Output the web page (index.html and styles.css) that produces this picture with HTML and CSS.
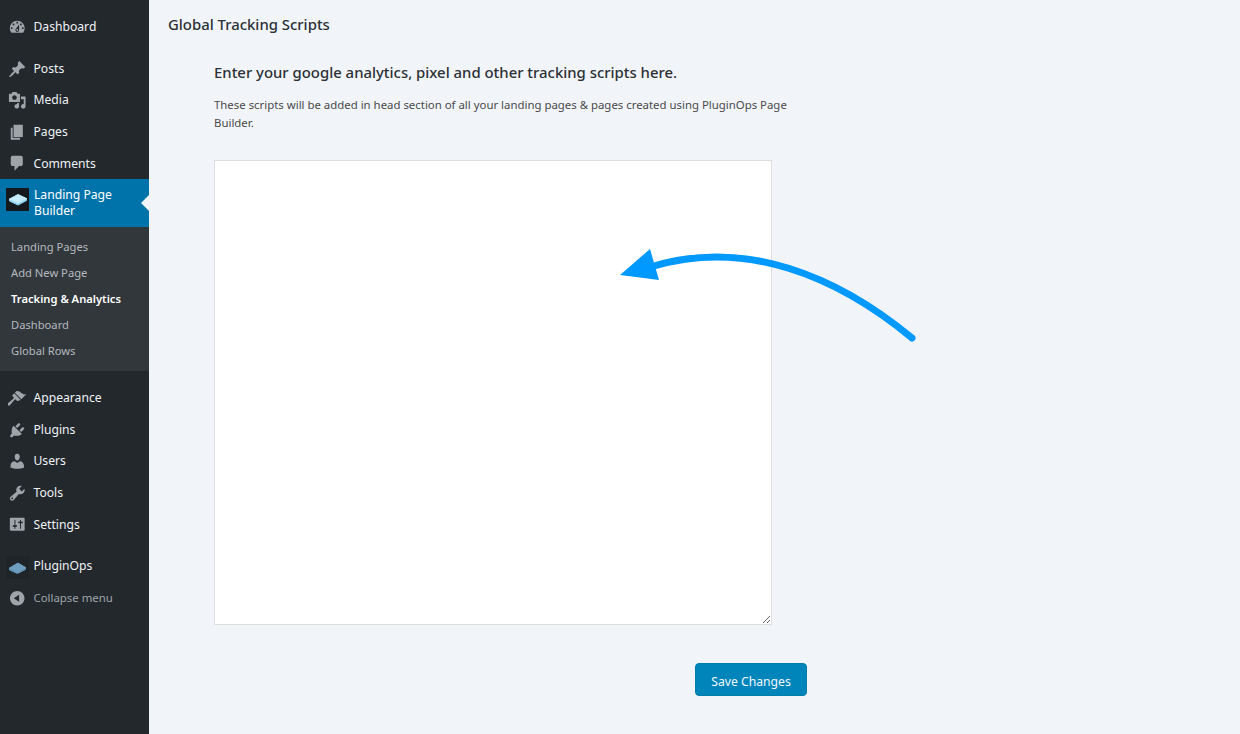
FILE: index.html
```html
<!DOCTYPE html>
<html lang="en">
<head>
<meta charset="utf-8">
<title>Global Tracking Scripts</title>
<link rel="stylesheet" href="styles.css">
</head>
<body>
<div class="layout">
  <aside class="sidebar">
    <nav class="menu">
      <a class="item"><svg class="icon" viewBox="0 0 20 20"><path d="M3.76 16h12.48c1.1-1.37 1.76-3.11 1.76-5 0-4.42-3.58-8-8-8s-8 3.58-8 8c0 1.89.66 3.63 1.76 5zM10 4c.55 0 1 .45 1 1s-.45 1-1 1-1-.45-1-1 .45-1 1-1zM6 6c.55 0 1 .45 1 1s-.45 1-1 1-1-.45-1-1 .45-1 1-1zm8 0c.55 0 1 .45 1 1s-.45 1-1 1-1-.45-1-1 .45-1 1-1zm-5.37 5.55L12 7v6c0 1.1-.9 2-2 2s-2-.9-2-2c0-.57.24-1.08.63-1.45zM4 10c.55 0 1 .45 1 1s-.45 1-1 1-1-.45-1-1 .45-1 1-1zm12 0c.55 0 1 .45 1 1s-.45 1-1 1-1-.45-1-1 .45-1 1-1zm-5 3c0-.55-.45-1-1-1s-1 .45-1 1 .45 1 1 1 1-.45 1-1z"/></svg><span>Dashboard</span></a>
      <div class="sep"></div>
      <a class="item"><svg class="icon" viewBox="0 0 20 20"><path d="M10.44 3.02l1.82-1.82 6.36 6.35-1.83 1.82c-1.05-.68-2.48-.57-3.41.36l-.75.75c-.92.93-1.04 2.35-.35 3.41l-1.83 1.82-2.41-2.41-2.8 2.79c-.42.42-3.38 2.71-3.8 2.29s1.86-3.39 2.28-3.81l2.79-2.79L4.1 9.36l1.83-1.82c1.05.69 2.48.57 3.4-.36l.75-.75c.93-.92 1.05-2.35.36-3.41z"/></svg><span>Posts</span></a>
      <a class="item"><svg class="icon" viewBox="0 0 20 20"><path d="M13 11V4c0-.55-.45-1-1-1h-1.67L9 1H5L3.67 3H2c-.55 0-1 .45-1 1v7c0 .55.45 1 1 1h10c.55 0 1-.45 1-1zM7 4.5c1.38 0 2.5 1.12 2.5 2.5S8.38 9.5 7 9.5 4.5 8.38 4.5 7 5.62 4.5 7 4.5zM14 6h5v10.5c0 1.38-1.12 2.5-2.5 2.5S14 17.88 14 16.5s1.12-2.5 2.5-2.5c.17 0 .34.02.5.05V9h-3V6zm-4 8.05V13h2v3.5c0 1.38-1.12 2.5-2.5 2.5S7 17.88 7 16.5 8.12 14 9.5 14c.17 0 .34.02.5.05z"/></svg><span>Media</span></a>
      <a class="item"><svg class="icon" viewBox="0 0 20 20"><path d="M6 15V2h10v13H6zm-1 1h8v2H3V5h2v11z"/></svg><span>Pages</span></a>
      <a class="item"><svg class="icon" viewBox="0 0 20 20"><path d="M5 2h9c1.1 0 2 .9 2 2v7c0 1.1-.9 2-2 2h-2l-5 5v-5H5c-1.1 0-2-.9-2-2V4c0-1.1.9-2 2-2z"/></svg><span>Comments</span></a>
      <a class="item item-current">
        <span class="logo logo-dark"><svg viewBox="0 0 23 23"><path class="book-side" d="M3.5 11 12 15 20.5 10.5 20.5 12.5 12 17 3.5 13z"/><path class="book-top" d="M3.5 11 12 6.5 20.5 10.5 12 15z"/></svg></span>
        <span>Landing Page<br>Builder</span>
      </a>
      <div class="submenu">
        <a class="sub">Landing Pages</a>
        <a class="sub">Add New Page</a>
        <a class="sub sub-current">Tracking &amp; Analytics</a>
        <a class="sub">Dashboard</a>
        <a class="sub">Global Rows</a>
      </div>
      <div class="sep sep-after-sub"></div>
      <a class="item"><svg class="icon" viewBox="0 0 20 20"><path d="M14.48 11.06L7.41 3.99l1.5-1.5c.5-.56 2.3-.47 3.51.32 1.21.8 1.43 1.28 2.91 2.1 1.18.64 2.45 1.26 4.45.85zm-.71.71L6.7 4.7 4.93 6.47c-.39.39-.39 1.02 0 1.41l1.06 1.06c.39.39.39 1.03 0 1.42-.6.6-6.04 5.1-6.04 5.1-.59.59-.59 1.54 0 2.12.59.59 1.54.59 2.12 0 0 0 4.5-5.44 5.1-6.04.39-.39 1.03-.39 1.42 0l1.06 1.06c.39.39 1.02.39 1.41 0z"/></svg><span>Appearance</span></a>
      <a class="item"><svg class="icon" viewBox="0 0 20 20"><path d="M13.11 4.36L9.87 7.6 8 5.73l3.24-3.24c.35-.34 1.05-.2 1.56.32.52.51.66 1.21.31 1.55zm-8 1.77l.91-1.12 9.01 9.01-1.19.84c-.71.71-2.63 1.16-3.82 1.16H6.14L4.9 17.26c-.59.59-1.54.59-2.12 0-.59-.58-.59-1.53 0-2.12l1.24-1.24v-3.88c0-1.13.4-3.19 1.09-3.89zm7.26 3.97l3.24-3.24c.34-.35 1.04-.21 1.55.31.52.51.66 1.21.31 1.55l-3.24 3.25z"/></svg><span>Plugins</span></a>
      <a class="item"><svg class="icon" viewBox="0 0 20 20"><path d="M10 9.25c-2.27 0-2.73-3.44-2.73-3.44C7 4.02 7.82 2 9.97 2c2.16 0 2.98 2.02 2.71 3.81 0 0-.41 3.44-2.68 3.44zm0 2.57L12.72 10c2.39 0 4.52 2.33 4.52 4.53v2.49s-3.65 1.13-7.24 1.13c-3.65 0-7.24-1.13-7.24-1.13v-2.49c0-2.25 1.94-4.48 4.47-4.48z"/></svg><span>Users</span></a>
      <a class="item"><svg class="icon" viewBox="0 0 20 20"><path d="M16.68 9.77c-1.34 1.34-3.3 1.67-4.95.99l-5.41 6.52c-.99.99-2.59.99-3.58 0s-.99-2.59 0-3.57l6.52-5.42c-.68-1.65-.35-3.61.99-4.95 1.28-1.28 3.12-1.62 4.72-1.06l-2.89 2.89 2.82 2.82 2.86-2.87c.53 1.58.18 3.39-1.08 4.65zM3.81 16.21c.4.39 1.04.39 1.43 0 .4-.4.4-1.04 0-1.43-.39-.4-1.03-.4-1.43 0-.39.39-.39 1.03 0 1.43z"/></svg><span>Tools</span></a>
      <a class="item"><svg class="icon" viewBox="0 0 20 20"><path d="M18 16V4c0-.55-.45-1-1-1H3c-.55 0-1 .45-1 1v12c0 .55.45 1 1 1h14c.55 0 1-.45 1-1zM8 11h1c.55 0 1 .45 1 1s-.45 1-1 1H8v1.5c0 .28-.22.5-.5.5s-.5-.22-.5-.5V13H6c-.55 0-1-.45-1-1s.45-1 1-1h1V5.5c0-.28.22-.5.5-.5s.5.22.5.5V11zm5-2h-1c-.55 0-1-.45-1-1s.45-1 1-1h1V5.5c0-.28.22-.5.5-.5s.5.22.5.5V7h1c.55 0 1 .45 1 1s-.45 1-1 1h-1v5.5c0 .28-.22.5-.5.5s-.5-.22-.5-.5V9z"/></svg><span>Settings</span></a>
      <div class="sep"></div>
      <a class="item">
        <span class="logo logo-faint"><svg viewBox="0 0 23 23"><path class="book-side-dim" d="M3.5 12 11.5 16.5 19.5 11.5 19.5 13.5 11.5 17.5 3.5 14z"/><path class="book-top-dim" d="M3.5 12 12 7 19.5 11.5 11.5 16.5z"/></svg></span>
        <span class="item-raised">PluginOps</span>
      </a>
      <a class="item item-collapse"><svg class="icon" viewBox="0 0 20 20"><path d="M10 2.16c4.33 0 7.84 3.51 7.84 7.84s-3.51 7.84-7.84 7.84S2.16 14.33 2.16 10 5.71 2.16 10 2.16zm2 11.72V6.12L6.18 9.97z"/></svg><span>Collapse menu</span></a>
    </nav>
  </aside>
  <main class="content">
    <h1 class="page-title">Global Tracking Scripts</h1>
    <section class="panel">
      <h2 class="panel-title">Enter your google analytics, pixel and other tracking scripts here.</h2>
      <p class="panel-text">These scripts will be added in head section of all your landing pages &amp; pages created using PluginOps Page Builder.</p>
      <textarea class="scripts" aria-label="Tracking scripts"></textarea>
      <div class="actions"><button class="save" type="button">Save Changes</button></div>
    </section>
    <svg class="arrow" viewBox="0 0 1240 734" aria-hidden="true">
      <path class="arrow-line" d="M912 338C836 275 745 239 654 266"/>
      <path class="arrow-head" d="M620 275 650 249 659 280z"/>
    </svg>
  </main>
</div>
</body>
</html>
```

FILE: styles.css
```css
* { box-sizing: border-box; }
html, body { margin: 0; height: 100%; }
body { background: #f1f5f9; font-family: "Noto Sans", "Open Sans", sans-serif; overflow: hidden; }
.layout { display: flex; height: 734px; }

.sidebar { width: 149px; flex: none; background: #23282d; padding-top: 11px; }
.menu { display: flex; flex-direction: column; }
.item { display: flex; align-items: center; gap: 7px; height: 31.6px; padding-left: 8px; color: #eef2f6; font-size: 12.15px; line-height: 16px; position: relative; }
.icon { width: 18.5px; height: 18.5px; flex: none; fill: #9fa4a9; }
.sep { height: 10.4px; }
.sep-after-sub { height: 11px; }
.item-current { height: 48px; background: #0073aa; color: #fff; padding-left: 6px; gap: 5px; }
.item-current::after { content: ""; position: absolute; right: 0; top: 16px; border: 8px solid transparent; border-right-color: #f1f5f9; border-left-width: 0; }
.logo { width: 23px; height: 23px; flex: none; display: block; }
.logo svg { display: block; width: 23px; height: 23px; }
.logo-dark { background: #15191e; margin-bottom: 8px; }
.logo-faint { background: #1f2429; margin-left: -2px; margin-right: -2.5px; margin-top: 1px; }
.book-top { fill: #c6ebfc; stroke: #c6ebfc; stroke-width: 1; stroke-linejoin: round; }
.book-side { fill: #8fd6f7; stroke: #8fd6f7; stroke-width: 1; stroke-linejoin: round; }
.book-top-dim { fill: #6f9fc0; stroke: #6f9fc0; stroke-width: 1; stroke-linejoin: round; }
.book-side-dim { fill: #5f8fb0; stroke: #5f8fb0; stroke-width: 1; stroke-linejoin: round; }
.item-raised { margin-top: -1px; }
.item-collapse { color: #9fa4a9; font-size: 11.4px; }

.submenu { display: flex; flex-direction: column; background: #32373c; padding: 6px 0; height: 144px; }
.sub { height: 26px; flex: none; display: flex; align-items: center; padding-left: 11px; color: #b4b9be; font-size: 11.2px; }
.sub-current { color: #fff; font-weight: 600; }

.content { flex: 1; position: relative; padding: 14px 19px; color: #2b3035; }
.page-title { margin: 0; font-size: 14.9px; line-height: 20px; font-weight: 500; }
.panel { width: 590px; margin: 28px 0 0 46px; }
.panel-title { margin: 0; font-size: 14.9px; line-height: 20px; font-weight: 500; }
.panel-text { margin: 14px 0 0; font-size: 11.4px; line-height: 18px; color: #4a4a4a; }
.scripts { display: block; width: 558px; height: 465px; margin-top: 28px; background: #fff; border: 1px solid #ddd; outline: none; }
.actions { width: 593px; margin-top: 38px; display: flex; justify-content: flex-end; }
.save { width: 112px; height: 33px; background: #0085ba; border: 1px solid #007cad; border-radius: 4px; color: #f2f8fb; font: inherit; font-size: 12.2px; padding: 3px 0 0; }

.arrow { position: absolute; left: -149px; top: 0; width: 1240px; height: 734px; pointer-events: none; }
.arrow-line { fill: none; stroke: #0099ff; stroke-width: 7; stroke-linecap: round; }
.arrow-head { fill: #0099ff; }
```
